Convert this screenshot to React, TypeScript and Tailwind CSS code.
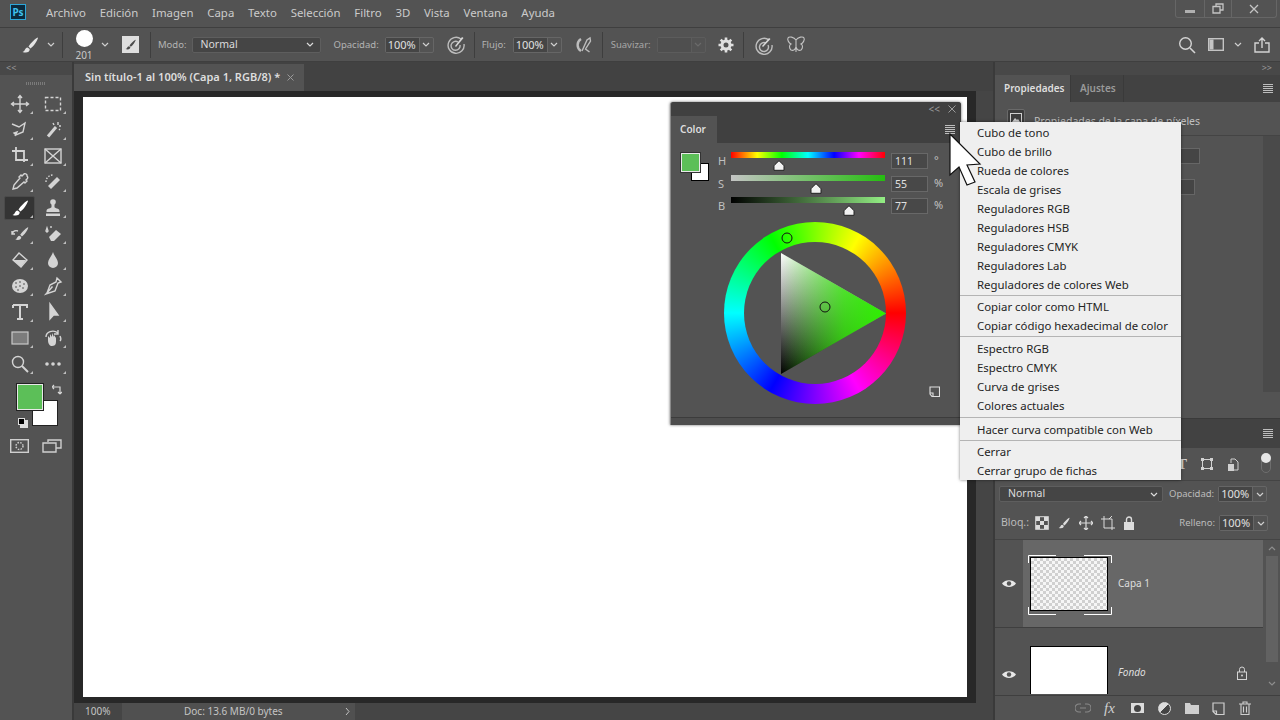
import React from "react";

const S = ({ w = 20, h = 20, vb, children, className = "" }: { w?: number; h?: number; vb?: string; children: React.ReactNode; className?: string }) => (
  <svg width={w} height={h} viewBox={vb ?? `0 0 ${w} ${h}`} fill="none" stroke="currentColor" strokeWidth="1.4" className={`shrink-0 ${className}`}>
    {children}
  </svg>
);

const Chev = ({ className = "" }: { className?: string }) => (
  <svg width="8" height="5" viewBox="0 0 8 5" fill="none" stroke="currentColor" strokeWidth="1.2" className={`shrink-0 ${className}`}>
    <path d="M1 1l3 3 3-3" />
  </svg>
);

const Lines = () => (
  <svg width="10" height="9" viewBox="0 0 10 9" stroke="#bdbdbd" strokeWidth="1" className="shrink-0">
    <path d="M0 .5h10M0 2.5h10M0 4.5h10M0 6.5h10M0 8.5h10" />
  </svg>
);

const brushPath = "M17.5 2.5C14 4.5 10.5 8.5 8.5 11.5l2 2c3-2 6.5-7 7.5-10.5zM7.5 12.5C4.5 13 5.5 16 2.5 17c3.5 1.3 7.5.5 7.2-3z";

const Tool = ({ children, sel }: { children: React.ReactNode; sel?: boolean }) => (
  <div className="flex h-[26px] w-[33px] items-center justify-center">
    <div className={`flex h-[24px] w-[31px] items-center justify-center rounded-[2px] text-[#d4d4d4] ${sel ? "bg-[#343434] border border-[#4a4a4a]" : ""}`}>
      <svg width="26" height="22" viewBox="0 0 26 22" fill="none" stroke="currentColor" strokeWidth="1.4" className="ml-[2px]">
        <g transform="translate(2 1)">{children}</g>
        <path d="M25 18v3h-3z" fill="#bdbdbd" stroke="none" />
      </svg>
    </div>
  </div>
);

const tools: React.ReactNode[] = [
  <path key="m" d="M10 2v16M2 10h16M8 4l2-2.500 2 2.500M8 16l2 2.500 2-2.500M4 8l-2.500 2 2.500 2M16 8l2.500 2-2.500 2" />,
  <rect key="mq" x="2.500" y="3.500" width="15" height="13" strokeDasharray="3 2" />,
  <path key="l" d="M2 4l7 3 6-4-2 9-7 3-2-2 3-1-2 4" />,
  <g key="w"><path d="M13 7L5 16.500" strokeWidth="3" /><path d="M15 2v3M10 3l1 2M18 6h-2M17 10l-1-1" /></g>,
  <path key="c" d="M2 5h12v11M6 1v13h12" strokeWidth="1.800" />,
  <g key="f"><rect x="2" y="3" width="16" height="14" /><path d="M2 3l16 14M18 3L2 17" /></g>,
  <path key="e" d="M17 3l-1-1c-1-1-2 0-3 1l-1 1-1-1-2 2 1 1-6 7-1 4 4-1 7-6 1 1 2-2-1-1 1-1c1-1 1-2 0-3z" />,
  <g key="h"><path d="M8 17l-3-3 9-9 3 3z" fill="currentColor" stroke="none" /><path d="M3 10C3 6 6 3 10 3" strokeDasharray="1.500 1.500" /></g>,
  <path key="b" d={brushPath} fill="#fff" stroke="none" />,
  <g key="st" fill="currentColor" stroke="none"><circle cx="10" cy="4" r="2.800" /><path d="M8.500 6h3v3c0 1.500 5 1 5 4v1h-13v-1c0-3 5-2.500 5-4zM3 15.500h14V18H3z" /></g>,
  <g key="hb"><path d={brushPath} fill="currentColor" stroke="none" transform="translate(3 1) scale(.85)" /><path d="M2 10c1-3 3-4 6-3M2 7l0 3 3 0" /></g>,
  <g key="er"><path d="M6 13l7-7 5 4-7 7H8z" fill="currentColor" stroke="none" /><path d="M3 7l1-3 1 3-1 1zM8 2v2" /></g>,
  <g key="pb"><path d="M9 3l8 7-6 7-8-7z" /><path d="M3 10h13l-5 7-8-7z" fill="currentColor" stroke="none" /></g>,
  <path key="d" d="M10 2c1 4 5 7 5 11a5 5 0 01-10 0c0-4 4-7 5-11z" fill="currentColor" stroke="none" />,
  <g key="sp"><ellipse cx="10" cy="10" rx="8" ry="7" fill="currentColor" stroke="none" /><path d="M5 7h2M9 6h2M13 8h2M5 11h2M9 10h2M12 12h2M7 14h2" stroke="#555" strokeWidth="1" /></g>,
  <path key="p" d="M14 2l4 4-3 1-3 8-9 3 6-7 .5-.5L4 17l3-8 6-3z" />,
  <g key="t"><path d="M3 3h14v3M3 6V3M10 3v14M7 17h6" strokeWidth="2" /></g>,
  <path key="a" d="M6 2l0 15 3.500-4 4.500 0z" fill="currentColor" stroke="currentColor" transform="translate(1 0)" />,
  <rect key="r" x="2" y="4" width="16" height="12" fill="#7c7c7c" stroke="#c8c8c8" strokeWidth="1.200" />,
  <g key="ro"><path d="M3 9c0-5 7-8 12-4M15 2v4h-4M17 8c1 2 1 4 0 5" /><path d="M5 12l0-4 2 2V6l2 3V5l2 4V7l2 3v4c0 3-2 4-4 4s-4-2-4-6z" fill="currentColor" stroke="none" /></g>,
  <g key="z"><circle cx="8" cy="8" r="5.500" /><path d="M12 12l6 6" strokeWidth="2" /></g>,
  <g key="dt" fill="currentColor" stroke="none"><circle cx="4" cy="10" r="1.800" /><circle cx="10" cy="10" r="1.800" /><circle cx="16" cy="10" r="1.800" /></g>,
];

const menuBar = ["Archivo", "Edición", "Imagen", "Capa", "Texto", "Selección", "Filtro", "3D", "Vista", "Ventana", "Ayuda"];

const Vsep = ({ cls }: { cls: string }) => <div className={`h-[26px] w-px bg-[#3e3e3e] ${cls}`} />;

const PctField = ({ dim, value = "100%" }: { dim?: boolean; value?: string }) => (
  <div className={`flex h-[16px] items-stretch rounded-[2px] border text-[11px] leading-[14px] ${dim ? "border-[#5c5c5c]" : "border-[#666666] text-[#e0e0e0]"}`}>
    <div className={`w-[33px] pl-[2px] ${dim ? "bg-[#4f4f4f]" : "bg-[#454545]"}`}>{value}</div>
    <div className={`flex w-[14px] items-center justify-center border-l ${dim ? "border-[#5c5c5c] text-[#6a6a6a]" : "border-[#666666] text-[#d0d0d0]"}`}>
      <Chev />
    </div>
  </div>
);

const menuGroups = [
  { gap: "", items: ["Cubo de tono", "Cubo de brillo", "Rueda de colores", "Escala de grises", "Reguladores RGB", "Reguladores HSB", "Reguladores CMYK", "Reguladores Lab", "Reguladores de colores Web"] },
  { gap: "mt-[1px] border-t border-[#b4b4b4] pt-[1px]", items: ["Copiar color como HTML", "Copiar código hexadecimal de color"] },
  { gap: "mt-[1.400px] border-t border-[#b4b4b4] pt-[1.400px]", items: ["Espectro RGB", "Espectro CMYK", "Curva de grises", "Colores actuales"] },
  { gap: "mt-[1.900px] border-t border-[#b4b4b4] pt-[1.900px]", items: ["Hacer curva compatible con Web"] },
  { gap: "mt-[1px] border-t border-[#b4b4b4] pt-[1px]", items: ["Cerrar", "Cerrar grupo de fichas"] },
];

const Thumb = ({ cls }: { cls: string }) => (
  <svg width="12" height="11" viewBox="0 0 12 11" className={`absolute top-[8px] ${cls}`}>
    <path d="M6 .7L10 4.500c1 1 1 1.500 1 2.500v3.300H1V7c0-1 0-1.500 1-2.500z" fill="#f2f2f2" stroke="#222" strokeWidth="1" />
  </svg>
);

const sliders = [
  { l: "H", v: "111", u: "°", bar: "bg-[linear-gradient(90deg,#f00,#ff0_17%,#0f0_33%,#0ff_50%,#00f_67%,#f0f_83%,#f00)]", t: "left-[42px]" },
  { l: "S", v: "55", u: "%", bar: "bg-[linear-gradient(90deg,#c4c4c4,#25bd10)]", t: "left-[79px]" },
  { l: "B", v: "77", u: "%", bar: "bg-[linear-gradient(90deg,#000,#93ee84)]", t: "left-[112px]" },
];

const Eye = () => (
  <svg width="14" height="9" viewBox="0 0 14 9" className="shrink-0">
    <path d="M0 4.500C3 0 11 0 14 4.500 11 9 3 9 0 4.500z" fill="#e8e8e8" />
    <circle cx="7" cy="4.500" r="2.200" fill="#555" />
  </svg>
);

const Corners = () => (
  <svg width="84" height="60" viewBox="0 0 84 60" fill="none" stroke="#fff" strokeWidth="1" className="absolute -left-[3px] -top-[3px]">
    <path d="M.5 8V.5H28M56 .5h27.500V8M83.500 52v7.500H56M28 59.500H.5V52" />
  </svg>
);

export default function App() {
  return (
    <div className="relative flex h-[720px] w-[1280px] flex-col overflow-hidden bg-[#535353] font-['Noto_Sans','Open_Sans',sans-serif] text-[11.4px] text-[#c8c8c8]">
      {/* menu bar */}
      <div className="flex h-[28px] shrink-0 items-start border-b border-[#3f3f3f]">
        <div className="ml-[10px] mt-[4px] flex h-[16px] w-[16px] items-center justify-center border border-[#2ea6d8] bg-[#0b2a3e] text-[10px] font-bold leading-none text-[#3fc0ee]">Ps</div>
        <div className="ml-[20px] mt-[4px] flex gap-[13.800px] leading-[18px] text-[#cbcbcb]">
          {menuBar.map((m) => (
            <span key={m}>{m}</span>
          ))}
        </div>
        <div className="ml-auto mr-[3px] flex h-[18px] w-[102px] rounded-b-[3px] border border-t-0 border-[#666666] text-[#c4c4c4]">
          <div className="flex w-[28px] items-center justify-center"><div className="mt-[5px] h-[3px] w-[10px] bg-[#b0b0b0]" /></div>
          <div className="flex w-[28px] items-center justify-center border-x border-[#666666]">
            <S w={12} h={11}><path d="M4 3V1h7v6H8.500M1 3.500h7v6.500H1z" strokeWidth="1.300" /></S>
          </div>
          <div className="flex flex-1 items-center justify-center">
            <S w={10} h={10}><path d="M1 1l8 8M9 1L1 9" strokeWidth="1.300" /></S>
          </div>
        </div>
      </div>

      {/* options bar */}
      <div className="flex h-[34px] shrink-0 items-center border-b border-[#3f3f3f] text-[9.500px] leading-none text-[#b4b4b4]">
        <S w={20} h={20} className="ml-[20px] text-[#e4e4e4]"><path d={brushPath} fill="currentColor" stroke="none" /></S>
        <Chev className="ml-[7px] text-[#cfcfcf]" />
        <Vsep cls="ml-[7px]" />
        <div className="relative ml-[12px] flex h-[30px] w-[18px] flex-col items-center">
          <div className="h-[17px] w-[17px] shrink-0 rounded-full bg-white" />
          <span className="mt-[3px] text-[10px] text-[#c8c8c8]">201</span>
        </div>
        <Chev className="ml-[8px] text-[#cfcfcf]" />
        <div className="ml-[13px] flex h-[17px] w-[17px] items-center justify-center bg-[#dedede]">
          <svg width="13" height="13" viewBox="0 0 20 20"><path d={brushPath} fill="#4a4a4a" /></svg>
        </div>
        <Vsep cls="ml-[11px]" />
        <span className="ml-[7px]">Modo:</span>
        <div className="ml-[5px] flex h-[16px] w-[129px] items-center justify-between rounded-[2px] border border-[#5e5e5e] bg-[#454545] pl-[8px] pr-[6px] text-[10.500px] text-[#dcdcdc]">
          Normal<Chev />
        </div>
        <span className="ml-[13px]">Opacidad:</span>
        <div className="ml-[6px]"><PctField /></div>
        <S w={20} h={20} className="ml-[11px] text-[#bdbdbd]"><path d="M16 4a8 8 0 103 5M13 7a4.500 4.500 0 102 3" /><path d="M10 11l7-9 1.500 1L11 12z" fill="#d8d8d8" stroke="none" /></S>
        <Vsep cls="ml-[9px]" />
        <span className="ml-[7px]">Flujo:</span>
        <div className="ml-[7px]"><PctField /></div>
        <S w={20} h={20} className="ml-[11px] text-[#bdbdbd]"><path d="M8 4a7 7 0 000 12" strokeWidth="2.400" /><path d="M9 16l5-11 3-2 .5 3-5 8 4 3" /></S>
        <Vsep cls="ml-[9px]" />
        <span className="ml-[8px] text-[#a8a8a8]">Suavizar:</span>
        <div className="ml-[6px]"><PctField dim value="" /></div>
        <S w={18} h={18} className="ml-[11px] text-[#e0e0e0]">
          <circle cx="9" cy="9" r="4" strokeWidth="3" />
          <path d="M9 1.500v3M9 13.500v3M1.500 9h3M13.500 9h3M3.700 3.700l2 2M12.300 12.300l2 2M14.300 3.700l-2 2M5.700 12.300l-2 2" strokeWidth="2.600" />
        </S>
        <Vsep cls="ml-[8px]" />
        <S w={20} h={20} className="ml-[9px] text-[#bdbdbd]"><path d="M16 5a8 8 0 103 5M13 8a4.500 4.500 0 102 2" /><path d="M9 11l7-8 1.500 1L10 12z" fill="#d8d8d8" stroke="none" /></S>
        <S w={20} h={20} className="ml-[13px] text-[#c4c4c4]"><path d="M10 5C8 2 3 1 2 3c-1 2 1 5 3 6-2 1-2 4 0 6 2 1 4 0 5-3 1 3 3 4 5 3 2-2 2-5 0-6 2-1 4-4 3-6-1-2-6-1-8 2zM10 5v12" strokeWidth="1.100" /></S>
        <S w={18} h={18} className="ml-auto text-[#d4d4d4]"><circle cx="7.500" cy="7.500" r="5.800" /><path d="M12 12l5 5" strokeWidth="1.600" /></S>
        <S w={16} h={13} className="ml-[12px] text-[#c4c4c4]"><rect x=".7" y=".7" width="14.600" height="11.600" /><rect x="1.500" y="1.500" width="4" height="10" fill="currentColor" stroke="none" /></S>
        <Chev className="ml-[10px] text-[#cfcfcf]" />
        <S w={16} h={16} className="ml-[12px] mr-[10px] text-[#d4d4d4]"><path d="M5 6H1v9h14V6h-4M8 11V1M5 4l3-3 3 3" /></S>
      </div>

      {/* main */}
      <div className="flex min-h-0 flex-1">
        {/* tool bar */}
        <div className="flex w-[72px] shrink-0 flex-col">
          <div className="h-[13px] bg-[#484848] pl-[6px] text-[9px] leading-[11px] text-[#9a9a9a]">{"<<"}</div>
          <div className="flex h-[16px] items-center justify-center">
            <div className="h-[3px] w-[20px] bg-[repeating-linear-gradient(90deg,#7a7a7a_0_1px,transparent_1px_2px)]" />
          </div>
          <div className="ml-[3px] grid w-[66px] grid-cols-2">
            {tools.map((t, i) => (
              <Tool key={i} sel={i === 8}>{t}</Tool>
            ))}
          </div>
          <div className="relative ml-[17px] mt-[7px] h-[46px] w-[44px]">
            <div className="absolute left-[15px] top-[16px] h-[26px] w-[26px] border border-[#222] bg-white" />
            <div className="absolute left-0 top-0 h-[26px] w-[26px] border border-[#e8e8e8] bg-[#5cbf58] outline outline-1 outline-[#222]" />
            <svg width="10" height="11" viewBox="0 0 10 11" fill="none" stroke="#d8d8d8" strokeWidth="1.200" className="absolute -right-[1px] top-0">
              <path d="M1 3h7v6M0 3l2-2M0 3l2 2M8 10L6 8M8 10l2-2" />
            </svg>
            <div className="absolute left-[3px] top-[36px] h-[8px] w-[8px] bg-[#ddd]">
              <div className="-ml-[2px] -mt-[2px] h-[7px] w-[7px] border border-[#ddd] bg-black" />
            </div>
          </div>
          <div className="ml-[10px] mt-[9px] flex items-center gap-[13px] text-[#cfcfcf]">
            <S w={19} h={14}><rect x=".7" y=".7" width="17.600" height="12.600" /><circle cx="9.500" cy="7" r="3.500" strokeDasharray="1.500 1.300" /></S>
            <S w={20} h={14}><path d="M6 3V1h13v8h-5M1 4h13v9H1z" /></S>
          </div>
        </div>

        {/* document */}
        <div className="flex w-[921px] shrink-0 flex-col border-l-2 border-[#3a3a3a]">
          <div className="flex h-[29px] shrink-0 bg-[#424242] pt-[2px]">
            <div className="flex w-[230px] items-center bg-[#535353] pl-[11px] text-[#dedede]">
              <span className="text-[11px] font-semibold">Sin título-1 al 100% (Capa 1, RGB/8) *</span>
              <S w={7} h={7} className="ml-[7px] text-[#9a9a9a]"><path d="M.5.5l6 6M6.500.5l-6 6" strokeWidth="1" /></S>
            </div>
          </div>
          <div className="flex min-h-0 flex-1">
            <div className="flex flex-1 bg-[#282828] pb-[6px] pl-[9px] pr-[9px] pt-[6px]">
              <div className="flex-1 bg-white" />
            </div>
            <div className="w-[17px] bg-[#454545]" />
          </div>
          <div className="flex h-[17px] shrink-0 bg-[#454545] text-[10px] leading-[17px] text-[#c4c4c4]">
            <div className="w-[48px] pl-[11px]">100%</div>
            <div className="flex w-[233px] items-center justify-between bg-[#505050] pl-[62px] pr-[5px]">
              <span>Doc: 13.6 MB/0 bytes</span>
              <S w={5} h={9}><path d="M1 1l3 3.500-3 3.500" strokeWidth="1" /></S>
            </div>
          </div>
        </div>

        {/* right panel */}
        <div className="flex min-w-0 flex-1 flex-col border-l-2 border-[#3a3a3a]">
          <div className="h-[13px] shrink-0 bg-[#484848] pr-[8px] text-right text-[9px] leading-[11px] text-[#9a9a9a]">{">>"}</div>
          <div className="flex h-[27px] shrink-0 items-stretch bg-[#424242] text-[10px] font-semibold">
            <div className="flex w-[76px] items-center border-r border-[#3a3a3a] bg-[#535353] pl-[9px] text-[#dedede]">Propiedades</div>
            <div className="flex w-[53px] items-center border-r border-[#3a3a3a] pl-[9px] text-[#9a9a9a]">Ajustes</div>
            <div className="ml-auto mr-[7px] flex items-center"><Lines /></div>
          </div>
          <div className="flex h-[34px] shrink-0 items-center border-b border-[#444444] pl-[12px] text-[10.500px] text-[#c0c0c0]">
            <div className="flex h-[20px] w-[18px] items-center justify-center rounded-[2px] border border-[#6a6a6a] bg-[#3c3c3c] text-[#cfcfcf]">
              <S w={12} h={11}><rect x=".5" y=".5" width="11" height="10" strokeWidth="1" /><path d="M2 9l3-4 2 2 1-1 2 3z" fill="currentColor" stroke="none" /></S>
            </div>
            <span className="ml-[9px] mt-[6px]">Propiedades de la capa de píxeles</span>
          </div>
          <div className="flex h-[282px] shrink-0 justify-end">
            <div className="mr-[63px] mt-[12px] flex flex-col items-end gap-[15px]">
              <div className="h-[16px] w-[30px] border border-[#666666] bg-[#454545]" />
              <div className="mr-[5px] h-[16px] w-[30px] border border-[#666666] bg-[#454545]" />
            </div>
            <div className="h-[256px] w-[17px] bg-[#4a4a4a]" />
          </div>

          <div className="flex h-[30px] shrink-0 items-center justify-end border-t border-[#3a3a3a] bg-[#424242] pr-[7px]"><Lines /></div>
          <div className="flex h-[33px] shrink-0 items-center justify-end gap-[14px] border-b border-[#444444] pr-[9px] text-[#d0d0d0]">
            <span className="font-['Liberation_Serif',serif] text-[15px] font-bold leading-none">T</span>
            <S w={12} h={12}><rect x="1.500" y="1.500" width="9" height="9" strokeWidth="1" /><path d="M0 0h3v3H0zM9 0h3v3H9zM0 9h3v3H0zM9 9h3v3H9z" fill="currentColor" stroke="none" /></S>
            <S w={12} h={13} className="mr-[8px]"><path d="M4 5V1h4l3 3v8H7" strokeWidth="1" /><rect x="1" y="6" width="6" height="7" fill="currentColor" stroke="none" /></S>
            <div className="relative h-[18px] w-[10px] rounded-full border border-[#6e6e6e]">
              <div className="absolute -left-[1px] -top-[3px] h-[10px] w-[10px] rounded-full bg-[#e6e6e6]" />
            </div>
          </div>
          <div className="flex h-[26px] shrink-0 items-center pl-[4px] text-[9.500px] text-[#bcbcbc]">
            <div className="flex h-[16px] w-[164px] items-center justify-between rounded-[2px] border border-[#5e5e5e] bg-[#454545] pl-[8px] pr-[4px] text-[10.500px] text-[#dcdcdc]">
              Normal<Chev />
            </div>
            <span className="ml-[6px]">Opacidad:</span>
            <div className="ml-[4px]"><PctField /></div>
          </div>
          <div className="flex h-[33px] shrink-0 items-center border-b border-[#444444] pl-[6px] text-[9.500px] text-[#bcbcbc]">
            <span className="text-[10.500px]">Bloq.:</span>
            <div className="ml-[6px] flex items-center gap-[8px] text-[#dcdcdc]">
              <S w={14} h={14}><rect x=".7" y=".7" width="12.600" height="12.600" strokeWidth="1" /><path d="M1 1h4v4H1zM9 1h4v4H9zM5 5h4v4H5zM1 9h4v4H1zM9 9h4v4H9z" fill="currentColor" stroke="none" /></S>
              <svg width="14" height="14" viewBox="0 0 20 20"><path d={brushPath} fill="currentColor" /></svg>
              <S w={14} h={14}><path d="M7 0v14M0 7h14M5 2l2-2 2 2M5 12l2 2 2-2M2 5L0 7l2 2M12 5l2 2-2 2" strokeWidth="1.200" /></S>
              <S w={14} h={14}><path d="M3 0v12h11M0 3h11v11M8 3l3-3" strokeWidth="1" /></S>
              <S w={12} h={14}><path d="M3.500 6V3.500a2.500 2.500 0 015 0V6" /><rect x="1" y="6" width="10" height="8" fill="currentColor" stroke="none" /></S>
            </div>
            <span className="ml-auto mr-[4px]">Relleno:</span>
            <div className="mr-[12px]"><PctField /></div>
          </div>

          {/* layers */}
          <div className="flex min-h-0 flex-1">
            <div className="flex min-w-0 flex-1 flex-col">
              <div className="flex h-[88px] shrink-0 border-b border-[#3f3f3f]">
                <div className="flex w-[28px] items-center justify-center"><Eye /></div>
                <div className="flex flex-1 items-center bg-[#676767] pl-[7px]">
                  <div className="relative h-[54px] w-[78px] border border-black bg-[repeating-conic-gradient(#d0d0d0_0_25%,#f6f6f6_0_50%)] bg-[length:6px_6px]">
                    <Corners />
                  </div>
                  <span className="ml-[10px] text-[10px] text-[#dedede]">Capa 1</span>
                </div>
              </div>
              <div className="flex h-[66px] shrink-0">
                <div className="flex w-[28px] items-center justify-center pt-[26px]"><Eye /></div>
                <div className="flex flex-1 items-end pl-[7px]">
                  <div className="h-[48px] w-[78px] border-x border-t border-black bg-white" />
                  <span className="mb-[14px] ml-[10px] text-[10px] italic text-[#dedede]">Fondo</span>
                  <S w={12} h={14} className="mb-[14px] ml-auto mr-[15px] text-[#d4d4d4]"><path d="M3.500 6V3.500a2.500 2.500 0 015 0V6" strokeWidth="1" /><rect x="1.500" y="6" width="9" height="7.500" strokeWidth="1" /><circle cx="6" cy="9.500" r="1" fill="currentColor" stroke="none" /></S>
                </div>
              </div>
            </div>
            <div className="flex w-[17px] shrink-0 flex-col items-center pt-[3px] text-[#8e8e8e]">
              <Chev className="mt-[3px] rotate-180" />
              <div className="mt-[5px] h-[106px] w-[12px] bg-[#626262]" />
              <Chev className="mt-[19px]" />
            </div>
          </div>
          <div className="flex h-[25px] shrink-0 items-center border-t border-[#3f3f3f] pl-[80px] text-[#cfcfcf]">
            <S w={16} h={10} className="text-[#8a8a8a]"><path d="M6 1H4a4 4 0 000 8h2M10 1h2a4 4 0 010 8h-2M5 5h6" strokeWidth="1.100" /></S>
            <span className="ml-[13px] w-[20px] font-['Liberation_Serif',serif] text-[15px] italic leading-none">fx</span>
            <div className="relative ml-[7px] h-[10px] w-[13px] bg-[#dcdcdc]"><div className="absolute left-[3px] top-[1.500px] h-[7px] w-[7px] rounded-full bg-[#444]" /></div>
            <div className="ml-[14px] h-[13px] w-[13px] rounded-full border border-[#dcdcdc] bg-[linear-gradient(135deg,#dcdcdc_50%,#444_50%)]" />
            <S w={14} h={12} className="ml-[14px]"><path d="M0 1h5l1 2h8v9H0z" fill="currentColor" stroke="none" /></S>
            <S w={13} h={13} className="ml-[13px]"><path d="M4 12.500H12V1H1v8.500zM1 9h3.500v3.500" strokeWidth="1.200" /></S>
            <S w={12} h={14} className="ml-[14px]"><path d="M0 3h12M4 3V1h4v2M2 3v10.500h8V3M4.500 5.500v6M7.500 5.500v6" strokeWidth="1.100" /></S>
          </div>
        </div>
      </div>

      {/* floating colour panel */}
      <div className="absolute left-[670px] top-[102px] flex h-[323px] w-[291px] flex-col rounded-t-[3px] border-l border-[#8a8a8a] bg-[#535353] shadow-[0_0_3px_rgba(0,0,0,0.6)]">
        <div className="flex h-[14px] shrink-0 items-center justify-end gap-[8px] rounded-t-[3px] bg-[#404040] pr-[5px] text-[#9c9c9c]">
          <span className="text-[10px] leading-none">{"<<"}</span>
          <S w={8} h={8}><path d="M.5.5l7 7M7.500.5l-7 7" strokeWidth="1" /></S>
        </div>
        <div className="flex h-[27px] shrink-0 items-stretch bg-[#404040]">
          <div className="flex w-[46px] items-center bg-[#535353] pl-[9px] text-[10px] font-semibold text-[#dedede]">Color</div>
          <div className="ml-auto mr-[6px] flex items-center"><Lines /></div>
        </div>
        <div className="flex pl-[10px] pt-[9px]">
          <div className="relative mt-[1px] h-[30px] w-[37px]">
            <div className="absolute left-[10px] top-[10px] h-[18px] w-[18px] border border-black bg-white" />
            <div className="absolute left-0 top-0 h-[19px] w-[19px] border border-[#e8e8e8] bg-[#5cbf58] outline outline-1 outline-[#333]" />
          </div>
          <div className="flex flex-col">
            {sliders.map((s) => (
              <div key={s.l} className="flex h-[22.500px] items-start text-[#c0c0c0]">
                <span className="mt-[1px] w-[13px] text-[11px] leading-[15px]">{s.l}</span>
                <div className="relative w-[154px]">
                  <div className={`h-[6px] w-full ${s.bar}`} />
                  <Thumb cls={s.t} />
                </div>
                <div className="ml-[6px] mt-px h-[16px] w-[37px] border border-[#686868] bg-[#484848] pl-[3px] text-[10.500px] leading-[14px] text-[#e0e0e0]">{s.v}</div>
                <span className="ml-[6px] text-[11px] leading-[16px]">{s.u}</span>
              </div>
            ))}
          </div>
        </div>
        <div className="relative ml-[53px] mt-[2px] h-[182px] w-[182px] rounded-full bg-[conic-gradient(from_90deg,#f00,#f0f,#00f,#0ff,#0f0,#ff0,#f00)]">
          <div className="absolute inset-[20px] rounded-full bg-[#535353]" />
          <svg width="182" height="182" viewBox="0 0 182 182" className="absolute left-0 top-0">
            <defs>
              <linearGradient id="tv" x1="0" y1="0" x2="0" y2="1">
                <stop offset="0" stopColor="#fff" />
                <stop offset="1" stopColor="#000" />
              </linearGradient>
              <linearGradient id="th" x1="0" y1="0" x2="1" y2="0">
                <stop offset="0" stopColor="#2ef000" stopOpacity="0" />
                <stop offset="0.6" stopColor="#2ef000" stopOpacity="0.75" />
                <stop offset="1" stopColor="#2ef000" stopOpacity="1" />
              </linearGradient>
            </defs>
            <polygon points="57,31 162,91.500 57,152" fill="url(#tv)" />
            <polygon points="57,31 162,91.500 57,152" fill="url(#th)" />
            <circle cx="101" cy="85" r="5" fill="none" stroke="#111" strokeWidth="1" />
            <circle cx="63" cy="16" r="5" fill="none" stroke="#111" strokeWidth="1" />
          </svg>
        </div>
        <div className="absolute left-[258px] top-[284px] text-[#e0e0e0]">
          <S w={11} h={11}><path d="M3 10.500h7.500V1H1v7zM1 7h3v3.500" strokeWidth="1.100" /></S>
        </div>
        <div className="absolute bottom-0 left-0 h-[8px] w-full border-t border-[#3c3c3c] bg-[#4d4d4d]" />
      </div>

      {/* popup menu */}
      <div className="absolute left-[960px] top-[122px] flex w-[221px] flex-col bg-[#efefef] pb-[0.500px] pt-[1px] text-[11.4px] text-[#242424] shadow-[0_0_3px_rgba(0,0,0,0.5)]">
        {menuGroups.map((g, i) => (
          <div key={i} className={g.gap}>
            {g.items.map((t) => (
              <div key={t} className="h-[19px] pl-[17px] leading-[19px]">{t}</div>
            ))}
          </div>
        ))}
      </div>

      {/* mouse pointer */}
      <svg width="40" height="60" viewBox="0 0 40 60" className="absolute left-[944px] top-[128px]">
        <path d="M6 6v41l9-8 8 18 8-3-8-17 13-1z" fill="#fff" stroke="#111" strokeWidth="1.200" />
      </svg>
    </div>
  );
}
